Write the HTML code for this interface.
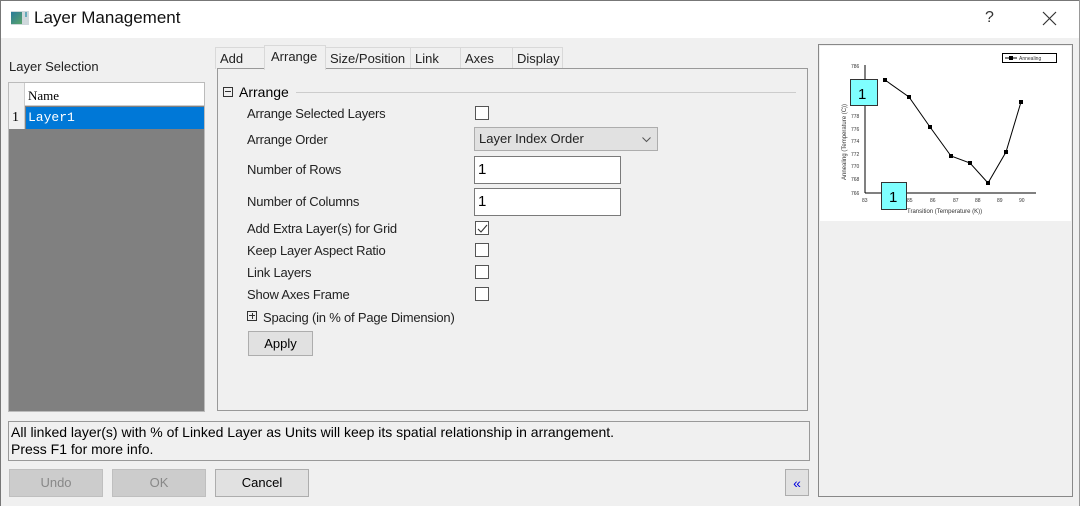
<!DOCTYPE html>
<html><head><style>
*{box-sizing:border-box;margin:0;padding:0}
body{width:1080px;height:506px;position:relative;background:#f0f0f0;font-family:"Liberation Sans",sans-serif;font-size:13px;color:#000;overflow:hidden}
.a{position:absolute}
.cb{position:absolute;left:475px;width:14px;height:14px;border:1px solid #555;background:#fff}
.lbl{position:absolute;left:247px;font-size:13px;color:#222;letter-spacing:-0.2px}
.btn{position:absolute;border:1px solid #adadad;background:#e1e1e1;text-align:center;font-size:13px;line-height:26px}
.tab{position:absolute;top:47px;height:22px;border:1px solid #d9d9d9;border-bottom:none;background:#f0f0f0;font-size:13px;padding-left:4px;line-height:21px;color:#222}
.inp{position:absolute;left:474px;width:147px;height:28px;border:1px solid #7a7a7a;background:#fff;font-size:15px;padding-left:3px;line-height:26px}
</style></head><body>
<div class="a" style="left:0;top:0;width:1080px;height:38px;background:#fff;border-top:1px solid #777;border-left:1px solid #777"></div>
<div class="a" style="left:0;top:0;width:1px;height:506px;background:#777"></div>
<div class="a" style="left:1079px;top:0;width:1px;height:506px;background:#999"></div>
<div class="a" style="left:11px;top:11px;width:18px;height:14px;background:#cfd8dc"></div>
<div class="a" style="left:11px;top:12px;width:11px;height:12px;background:linear-gradient(135deg,#2a7a9a,#5aa56a)"></div>
<div class="a" style="left:25px;top:12px;width:2px;height:5px;background:#6ab"></div>
<div class="a" style="left:34px;top:8px;font-size:17px;color:#111">Layer Management</div>
<div class="a" style="left:985px;top:9px;font-size:16px;color:#333">?</div>
<svg class="a" style="left:1042px;top:11px" width="15" height="15"><path d="M1 1L14 14M14 1L1 14" stroke="#333" stroke-width="1.2"/></svg>

<div class="a" style="left:9px;top:59px;color:#222">Layer Selection</div>
<div class="a" style="left:8px;top:82px;width:197px;height:330px;border:1px solid #bbb;background:#808080"></div>
<div class="a" style="left:9px;top:83px;width:195px;height:23px;background:#fff;border-bottom:1px solid #ccc"></div>
<div class="a" style="left:9px;top:83px;width:16px;height:46px;background:#f0f0f0;border-right:1px solid #ccc"></div>
<div class="a" style="left:28px;top:88px;font-family:'Liberation Serif',serif;font-size:13px">Name</div>
<div class="a" style="left:26px;top:107px;width:178px;height:22px;background:#0078d7"></div>
<div class="a" style="left:12px;top:110px;font-family:'Liberation Serif',serif;font-size:14px">1</div>
<div class="a" style="left:28px;top:110px;font-family:'Liberation Mono',monospace;font-size:13px;color:#fff">Layer1</div>

<div class="tab" style="left:215px;width:51px">Add</div>
<div class="tab" style="left:325px;width:86px">Size/Position</div>
<div class="tab" style="left:410px;width:51px">Link</div>
<div class="tab" style="left:460px;width:53px">Axes</div>
<div class="tab" style="left:512px;width:51px">Display</div>
<div class="a" style="left:217px;top:68px;width:591px;height:343px;border:1px solid #999;background:#f0f0f0"></div>
<div class="tab" style="left:264px;top:45px;width:62px;height:25px;background:#f0f0f0;border-color:#d9d9d9;z-index:2;padding-left:6px">Arrange</div>

<div class="a" style="left:223px;top:87px;width:10px;height:10px;border:1px solid #333"></div>
<div class="a" style="left:225px;top:91px;width:6px;height:1px;background:#333"></div>
<div class="a" style="left:239px;top:84px;font-size:14px;font-weight:500">Arrange</div>
<div class="a" style="left:296px;top:92px;width:500px;height:1px;background:#ccc"></div>

<div class="lbl" style="top:106px">Arrange Selected Layers</div><div class="cb" style="top:106px"></div>
<div class="lbl" style="top:132px">Arrange Order</div>
<div class="a" style="left:474px;top:127px;width:184px;height:24px;border:1px solid #adadad;background:#e1e1e1;padding-left:4px;line-height:22px;color:#222">Layer Index Order<svg style="position:absolute;right:6px;top:9px" width="9" height="6"><path d="M0.5 0.5L4.5 4.5L8.5 0.5" stroke="#555" fill="none"/></svg></div>
<div class="lbl" style="top:162px">Number of Rows</div><div class="inp" style="top:156px">1</div>
<div class="lbl" style="top:194px">Number of Columns</div><div class="inp" style="top:188px">1</div>
<div class="lbl" style="top:221px">Add Extra Layer(s) for Grid</div><div class="cb" style="top:221px"><svg style="position:absolute;left:1px;top:1px" width="11" height="11"><path d="M1 6L4 9L10 2" stroke="#333" fill="none" stroke-width="1.1"/></svg></div>
<div class="lbl" style="top:243px">Keep Layer Aspect Ratio</div><div class="cb" style="top:243px"></div>
<div class="lbl" style="top:265px">Link Layers</div><div class="cb" style="top:265px"></div>
<div class="lbl" style="top:287px">Show Axes Frame</div><div class="cb" style="top:287px"></div>
<div class="a" style="left:247px;top:311px;width:10px;height:10px;border:1px solid #333"></div>
<div class="a" style="left:249px;top:315px;width:6px;height:1px;background:#333"></div>
<div class="a" style="left:251.5px;top:313px;width:1px;height:6px;background:#333"></div>
<div class="lbl" style="left:263px;top:310px">Spacing (in % of Page Dimension)</div>
<div class="btn" style="left:248px;top:331px;width:65px;height:25px;line-height:23px">Apply</div>

<div class="a" style="left:8px;top:421px;width:802px;height:40px;border:1px solid #999;background:#f0f0f0;padding:2px 0 0 2px;line-height:17px;font-size:14px">All linked layer(s) with % of Linked Layer as Units will keep its spatial relationship in arrangement.<br>Press F1 for more info.</div>

<div class="btn" style="left:9px;top:469px;width:94px;height:28px;background:#ccc;border-color:#bfbfbf;color:#888">Undo</div>
<div class="btn" style="left:112px;top:469px;width:94px;height:28px;background:#ccc;border-color:#bfbfbf;color:#888">OK</div>
<div class="btn" style="left:215px;top:469px;width:94px;height:28px">Cancel</div>
<div class="btn" style="left:785px;top:469px;width:24px;height:27px;color:#0000e0;font-size:14px">«</div>

<div class="a" style="left:818px;top:44px;width:255px;height:453px;border:1px solid #888;background:#f0f0f0"></div>
<div class="a" style="left:820px;top:46px;width:251px;height:175px;background:#fff"></div>
<svg class="a" style="left:818px;top:40px" width="262" height="190" viewBox="818 40 262 190">
<g stroke="#000" stroke-width="1" fill="none">
<line x1="865" y1="65" x2="865" y2="193"/>
<line x1="865" y1="193" x2="1036" y2="193"/>
<polyline points="885,80 909,97 930,127 951,156 970,163 988,183 1006,152 1021,102"/>
<rect x="1002.5" y="53.5" width="54" height="9"/>
<line x1="1005" y1="58" x2="1017" y2="58"/>
</g>
<g fill="#000">
<rect x="883" y="78" width="4" height="4"/><rect x="907" y="95" width="4" height="4"/><rect x="928" y="125" width="4" height="4"/><rect x="949" y="154" width="4" height="4"/><rect x="968" y="161" width="4" height="4"/><rect x="986" y="181" width="4" height="4"/><rect x="1004" y="150" width="4" height="4"/><rect x="1019" y="100" width="4" height="4"/><rect x="1009" y="56" width="4" height="4"/>
</g>
<g font-family="Liberation Sans" font-size="5" fill="#333">
<text x="1019" y="60">Annealing</text>
<text x="851" y="68">786</text><text x="851" y="93">780</text><text x="851" y="118">778</text><text x="851" y="131">776</text><text x="851" y="143">774</text><text x="851" y="156">772</text><text x="851" y="168">770</text><text x="851" y="181">768</text><text x="851" y="195">766</text>
<text x="862" y="202">83</text><text x="907" y="202">85</text><text x="930" y="202">86</text><text x="953" y="202">87</text><text x="975" y="202">88</text><text x="997" y="202">89</text><text x="1019" y="202">90</text>
<text x="907" y="213" font-size="6">Transition (Temperature (K))</text>
<text transform="translate(846,180) rotate(-90)" font-size="6">Annealing (Temperature (C))</text>
</g>
<rect x="850.5" y="79.5" width="27" height="26" fill="#7fffff" stroke="#333"/>
<text x="858" y="99" font-family="Liberation Sans" font-size="15" fill="#000">1</text>
<rect x="881.5" y="182.5" width="25" height="27" fill="#7fffff" stroke="#333"/>
<text x="889" y="202" font-family="Liberation Sans" font-size="15" fill="#000">1</text>
</svg>
</body></html>
